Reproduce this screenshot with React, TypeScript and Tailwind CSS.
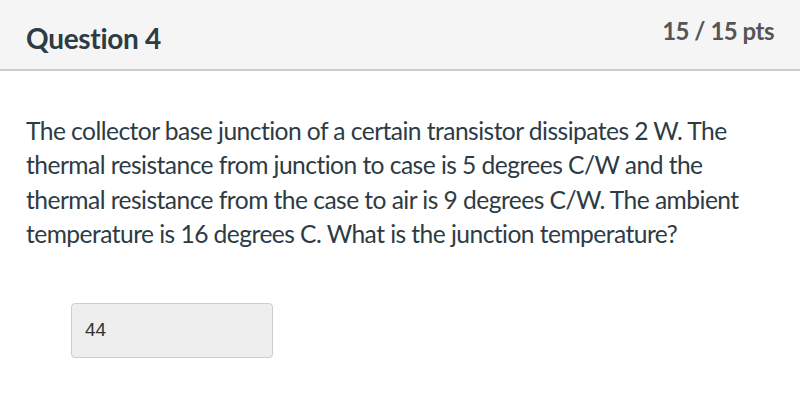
export default function App() {
  return (
    <div className="w-[800px] h-[414px] bg-white font-['Lato',sans-serif] overflow-hidden">
      {/* Header */}
      <div className="h-[71px] bg-[#f5f5f5] border-b-2 border-[#c7cdd1] flex items-start justify-between px-[26px]">
        <h2 className="mt-[22px] text-[28px] leading-[32px] font-bold tracking-[-0.3px] text-[#2d3b45]">Question 4</h2>
        <span className="mt-[17px] text-[24px] leading-[28px] font-bold tracking-[-0.5px] text-[#555555]">15 / 15 pts</span>
      </div>

      {/* Body */}
      <div className="px-[26px] pt-[43px]">
        <p className="text-[24.6px] leading-[34.3px] text-[#2d3b45] tracking-[-0.55px]">
          The collector base junction of a certain transistor dissipates 2 W. The thermal resistance from junction to
          case is 5 degrees C/W and the thermal resistance from the case to air is 9 degrees C/W. The ambient
          temperature is 16 degrees C. What is the junction temperature?
        </p>
        <div className="mt-[52px] ml-[45px] w-[202px] h-[55px] bg-[#eeeeee] border border-[#c7cdd1] rounded-[4px] flex items-center px-[13px]">
          <span className="text-[19px] text-[#333333] font-['Liberation_Sans',sans-serif]">44</span>
        </div>
      </div>
    </div>
  );
}
